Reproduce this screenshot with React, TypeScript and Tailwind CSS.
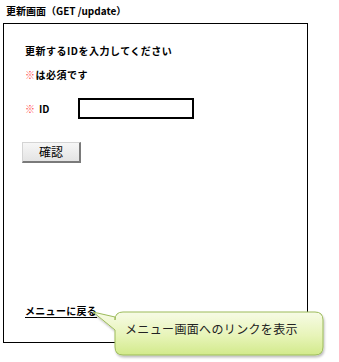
import React from 'react';

const jp = { fontFamily: '"Noto Sans CJK JP", "DejaVu Sans", sans-serif' };

export default function App() {
  return (
    <div className="relative w-[339px] h-[362px] bg-white overflow-hidden text-black" style={jp}>
      <div className="pl-[6px] pt-[5px] h-[23px] text-[10px] font-bold leading-[12px] whitespace-pre">更新画面（GET /update）</div>

      <div className="ml-[3px] w-[305px] h-[320px] border border-black flex flex-col">
        <div className="pl-[21px] pt-[21px] text-[10px] font-bold leading-[12px] tracking-[0.5px]">
          更新するIDを入力してください
        </div>
        <div className="pl-[21px] pt-[12px] text-[10px] font-bold leading-[12px] tracking-[0.5px]">
          <span className="text-[#ff4f4f]">※</span>は必須です
        </div>

        <div className="flex items-center pl-[21px] pt-[17px]">
          <div className="w-[53px] text-[10px] font-bold leading-[12px]">
            <span className="text-[#ff4f4f]">※</span>
            <span className="ml-[4px]">ID</span>
          </div>
          <div className="w-[116px] h-[21px] border-2 border-black bg-white" />
        </div>

        <div className="pl-[18px] pt-[19px]">
          <button className="w-[59px] h-[21px] bg-gradient-to-b from-[#f6f6f6] to-[#e4e4e4] border border-[#d4d4d4] border-r-[#7a7a7a] border-b-[#7a7a7a] border-r-2 border-b-2 text-[12px] leading-[16px] text-black" style={jp}>
            確認
          </button>
        </div>

        <div className="flex-1" />
        <div className="pl-[21px] pb-[22px]">
          <span className="text-[10px] font-bold leading-[12px] underline underline-offset-[2px] tracking-[0.3px]">メニューに戻る</span>
        </div>
      </div>

      {/* callout */}
      <div className="absolute left-[91px] top-[306px] w-[236px] h-[54px]">
        <svg width="236" height="54" className="absolute left-0 top-0">
          <defs>
            <linearGradient id="g" x1="0" y1="0" x2="0" y2="1">
              <stop offset="0" stopColor="#f7fbe6" />
              <stop offset="0.55" stopColor="#e7f4b8" />
              <stop offset="1" stopColor="#d2ea8b" />
            </linearGradient>
            <filter id="s" x="-10%" y="-10%" width="130%" height="140%">
              <feDropShadow dx="1" dy="2" stdDeviation="1.2" floodColor="#000" floodOpacity="0.25" />
            </filter>
          </defs>
          <path
            d="M32 6 H224 Q232 6 232 14 V41 Q232 49 224 49 H32 Q24 49 24 41 V24 L2 6 L24 11 V14 Q24 6 32 6 Z"
            fill="url(#g)"
            stroke="#9cbb5a"
            strokeWidth="1"
            filter="url(#s)"
          />
        </svg>
        <div className="absolute left-[34px] top-[15px] text-[12px] leading-[16px] tracking-[0.35px] text-[#222]">
          メニュー画面へのリンクを表示
        </div>
      </div>
    </div>
  );
}
